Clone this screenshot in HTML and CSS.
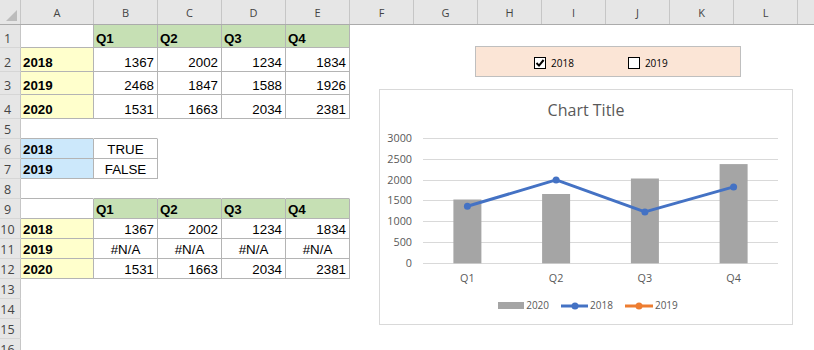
FILE: index.html
```html
<!DOCTYPE html>
<html lang="en">
<head>
    <meta charset="UTF-8">
    <meta name="viewport" content="width=device-width, initial-scale=1.0">
    <title>Sheet1 - Chart toggle</title>
    <link rel="stylesheet" href="styles.css">
</head>
<body>
    <div class="colhead">
        <div class="corner">
            <svg width="20" height="24" viewBox="0 0 20 24"><polygon points="17,10 17,21 6,21" fill="#bcbcbc"/></svg>
        </div>
        <div class="ch ch-a">A</div>
        <div class="ch">B</div>
        <div class="ch">C</div>
        <div class="ch">D</div>
        <div class="ch">E</div>
        <div class="ch">F</div>
        <div class="ch">G</div>
        <div class="ch">H</div>
        <div class="ch">I</div>
        <div class="ch">J</div>
        <div class="ch">K</div>
        <div class="ch">L</div>
        <div class="ch ch-rest"></div>
    </div>

    <table class="sheet">
        <colgroup>
            <col class="c-rh">
            <col class="c-a">
            <col class="c-n">
            <col class="c-n">
            <col class="c-n">
            <col class="c-n">
        </colgroup>
        <tr class="r23"><th>1</th><td class="g"></td><td class="g q">Q1</td><td class="g q">Q2</td><td class="g q">Q3</td><td class="g q">Q4</td></tr>
        <tr class="r24"><th>2</th><td class="g lbl">2018</td><td class="g num">1367</td><td class="g num">2002</td><td class="g num">1234</td><td class="g num">1834</td></tr>
        <tr class="r23"><th>3</th><td class="g lbl">2019</td><td class="g num">2468</td><td class="g num">1847</td><td class="g num">1588</td><td class="g num">1926</td></tr>
        <tr class="r24"><th>4</th><td class="g lbl">2020</td><td class="g num">1531</td><td class="g num">1663</td><td class="g num">2034</td><td class="g num">2381</td></tr>
        <tr><th>5</th><td class="edge"></td><td class="edge"></td><td></td><td></td><td></td></tr>
        <tr><th>6</th><td class="g lbl blue">2018</td><td class="g ctr">TRUE</td><td></td><td></td><td></td></tr>
        <tr><th>7</th><td class="g lbl blue">2019</td><td class="g ctr">FALSE</td><td></td><td></td><td></td></tr>
        <tr><th>8</th><td class="edge"></td><td class="edge"></td><td class="edge"></td><td class="edge"></td><td class="edge"></td></tr>
        <tr><th>9</th><td class="g"></td><td class="g q">Q1</td><td class="g q">Q2</td><td class="g q">Q3</td><td class="g q">Q4</td></tr>
        <tr><th>10</th><td class="g lbl">2018</td><td class="g num">1367</td><td class="g num">2002</td><td class="g num">1234</td><td class="g num">1834</td></tr>
        <tr><th>11</th><td class="g lbl">2019</td><td class="g ctr">#N/A</td><td class="g ctr">#N/A</td><td class="g ctr">#N/A</td><td class="g ctr">#N/A</td></tr>
        <tr><th>12</th><td class="g lbl">2020</td><td class="g num">1531</td><td class="g num">1663</td><td class="g num">2034</td><td class="g num">2381</td></tr>
        <tr><th>13</th><td></td><td></td><td></td><td></td><td></td></tr>
        <tr><th>14</th><td></td><td></td><td></td><td></td><td></td></tr>
        <tr><th>15</th><td></td><td></td><td></td><td></td><td></td></tr>
        <tr><th>16</th><td></td><td></td><td></td><td></td><td></td></tr>
    </table>

    <!-- form controls floating over the sheet -->
    <div class="panel">
        <label class="opt">
            <span class="box">
                <svg width="10" height="10" viewBox="0 0 10 10"><polyline points="1.5,5 4,7.6 8.6,2" fill="none" stroke="#000" stroke-width="2"/></svg>
            </span>
            2018
        </label>
        <label class="opt">
            <span class="box"></span>
            2019
        </label>
    </div>

    <div class="chart">
        <div class="chart-title">Chart Title</div>
        <svg class="plot" width="412" height="160" viewBox="0 0 412 160">
            <g stroke="#d9d9d9" stroke-width="1">
                <line x1="43" y1="12.5" x2="398" y2="12.5"/>
                <line x1="43" y1="33.5" x2="398" y2="33.5"/>
                <line x1="43" y1="54.5" x2="398" y2="54.5"/>
                <line x1="43" y1="74.5" x2="398" y2="74.5"/>
                <line x1="43" y1="95.5" x2="398" y2="95.5"/>
                <line x1="43" y1="116.5" x2="398" y2="116.5"/>
                <line x1="43" y1="137.5" x2="398" y2="137.5"/>
            </g>
            <g class="axis" text-anchor="end">
                <text x="32" y="16.3">3000</text>
                <text x="32" y="37.3">2500</text>
                <text x="32" y="58.3">2000</text>
                <text x="32" y="78.3">1500</text>
                <text x="32" y="99.3">1000</text>
                <text x="32" y="120.3">500</text>
                <text x="32" y="141.3">0</text>
            </g>
            <g fill="#a5a5a5">
                <rect x="73.4" y="73.5" width="28" height="63.8"/>
                <rect x="162.1" y="68" width="28" height="69.3"/>
                <rect x="250.9" y="52.5" width="28" height="84.8"/>
                <rect x="339.6" y="38.1" width="28" height="99.2"/>
            </g>
            <polyline points="87.4,80.3 176.1,53.9 264.9,85.9 353.6,60.9" fill="none" stroke="#4472c4" stroke-width="3" stroke-linejoin="round"/>
            <g fill="#4472c4">
                <circle cx="87.4" cy="80.3" r="3.5"/>
                <circle cx="176.1" cy="53.9" r="3.5"/>
                <circle cx="264.9" cy="85.9" r="3.5"/>
                <circle cx="353.6" cy="60.9" r="3.5"/>
            </g>
            <g class="axis" text-anchor="middle">
                <text x="87.4" y="155.8">Q1</text>
                <text x="176.1" y="155.8">Q2</text>
                <text x="264.9" y="155.8">Q3</text>
                <text x="353.6" y="155.8">Q4</text>
            </g>
        </svg>
        <div class="legend">
            <span class="key"><svg width="26" height="7"><rect width="26" height="7" fill="#a5a5a5"/></svg>2020</span>
            <span class="key"><svg width="27" height="8"><line x1="0" y1="4" x2="27" y2="4" stroke="#4472c4" stroke-width="3"/><circle cx="14" cy="4" r="3.5" fill="#4472c4"/></svg>2018</span>
            <span class="key"><svg width="28" height="8"><line x1="0" y1="4" x2="28" y2="4" stroke="#ed7d31" stroke-width="3"/><circle cx="14" cy="4" r="3.5" fill="#ed7d31"/></svg>2019</span>
        </div>
    </div>
</body>
</html>
```

FILE: styles.css
```css
body {
    margin: 0;
    background: #fff;
    font-family: "Liberation Sans", Arial, sans-serif;
}

/* column letters */
.colhead {
    display: flex;
    height: 25px;
    box-sizing: border-box;
    background: #e6e6e6;
    border-bottom: 1px solid #ababab;
}
.corner {
    width: 21px;
    box-sizing: border-box;
    border-right: 1px solid #c6c6c6;
}
.corner svg {
    display: block;
}
.ch {
    width: 64px;
    box-sizing: border-box;
    border-right: 1px solid #c6c6c6;
    font: 11px "Open Sans", sans-serif;
    color: #444;
    text-align: center;
    padding-top: 5px;
}
.ch-a {
    width: 73px;
}
.ch-rest {
    flex: 1;
    border-right: none;
}

/* cells */
.sheet {
    border-collapse: separate;
    border-spacing: 0;
    table-layout: fixed;
    width: 350px;
    font-size: 13.33px;
    color: #000;
}
.c-rh { width: 21px; }
.c-a { width: 73px; }
.c-n { width: 64px; }

.sheet tr {
    height: 20px;
}
.sheet tr.r23 {
    height: 23px;
}
.sheet tr.r24 {
    height: 24px;
}
.sheet th {
    padding: 0 5px 1px 0;
    background: #e6e6e6;
    border-right: 1px solid #c6c6c6;
    border-bottom: 1px solid #d6d6d6;
    font: 12.5px "Open Sans", sans-serif;
    line-height: 15px;
    color: #444;
    text-align: center;
    vertical-align: bottom;
}
.sheet td {
    padding: 0 2px 1px 2px;
    line-height: 15px;
    vertical-align: bottom;
    white-space: nowrap;
    overflow: hidden;
    border-right: 1px solid transparent;
    border-bottom: 1px solid transparent;
}
.sheet td.g {
    border-color: #b4b4b4;
}
.sheet td.edge {
    border-bottom-color: #b4b4b4;
}
.num {
    text-align: right;
}
.sheet td.num {
    padding-right: 3px;
}
.ctr {
    text-align: center;
}
.lbl {
    font-weight: bold;
    background: #ffffcc;
}
.lbl.blue {
    background: #cce8fb;
}
.q {
    font-weight: bold;
    background: #c6e0b4;
}

/* check boxes */
.panel {
    position: absolute;
    left: 475px;
    top: 46px;
    width: 266px;
    height: 31px;
    box-sizing: border-box;
    border: 1px solid #bfbfbf;
    background: #fbe5d6;
    display: flex;
    align-items: center;
    gap: 54px;
    padding: 3px 0 0 58px;
    font: 10px "Open Sans", sans-serif;
    color: #000;
}
.opt {
    display: flex;
    align-items: center;
    gap: 5px;
}
.box {
    width: 12px;
    height: 12px;
    box-sizing: border-box;
    border: 1px solid #000;
    background: #fff;
}
.box svg {
    display: block;
}

/* chart */
.chart {
    position: absolute;
    left: 379px;
    top: 89px;
    width: 412px;
    height: 234px;
    border: 1px solid #d9d9d9;
    background: #fff;
}
.chart-title {
    height: 36px;
    box-sizing: border-box;
    padding-top: 9px;
    text-align: center;
    font: 16px/22px "Open Sans", sans-serif;
    color: #595959;
}
.plot {
    display: block;
}
.axis {
    font: 10.8px "Open Sans", sans-serif;
    fill: #595959;
}
.legend {
    display: flex;
    justify-content: center;
    align-items: center;
    gap: 12px;
    padding: 12px 0 0 4px;
    font: 10px/15px "Open Sans", sans-serif;
    color: #595959;
}
.key {
    display: flex;
    align-items: center;
    gap: 2px;
}
.key svg {
    display: block;
}
```
